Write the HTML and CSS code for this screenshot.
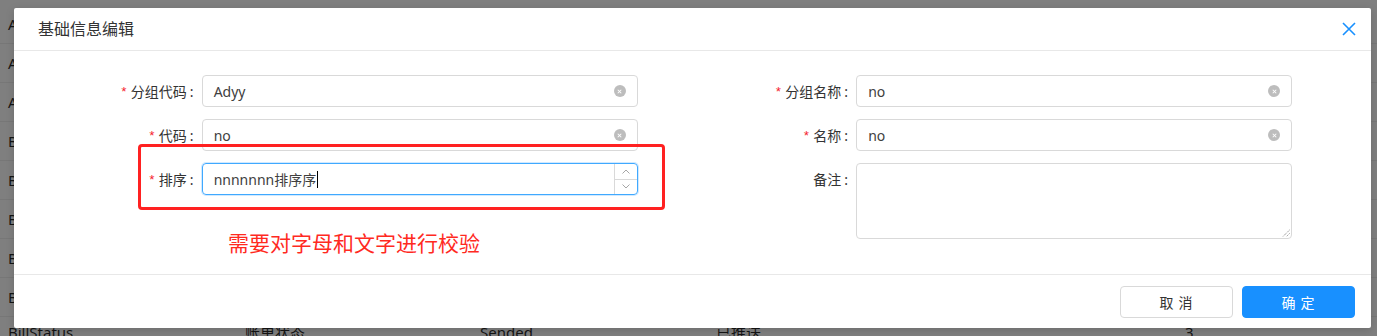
FILE: index.html
```html
<!DOCTYPE html>
<html lang="zh-CN">
<head>
<meta charset="utf-8">
<title>基础信息编辑</title>
<link rel="stylesheet" href="styles.css">
</head>
<body>
<div class="table">
  <div class="trow"><span class="c1">A</span></div>
  <div class="trow"><span class="c1">A</span></div>
  <div class="trow"><span class="c1">A</span></div>
  <div class="trow"><span class="c1">B</span></div>
  <div class="trow"><span class="c1">B</span></div>
  <div class="trow"><span class="c1">B</span></div>
  <div class="trow"><span class="c1">B</span></div>
  <div class="trow"><span class="c1">B</span></div>
  <div class="trow last"><span class="c1">BillStatus</span><span class="c2">账单状态</span><span class="c3">Sended</span><span class="c4">已推送</span><span class="c5">3</span></div>
</div>

<div class="modal">
  <div class="modal-header">
    <div class="modal-title">基础信息编辑</div>
    <svg class="close" width="14" height="14" viewBox="0 0 14 14"><path d="M1 1L13 13M13 1L1 13" stroke="#1890ff" stroke-width="1.6" fill="none"/></svg>
  </div>
  <div class="modal-body">
    <div class="form">
      <div class="item">
        <label class="label"><span class="req">*</span>分组代码<span class="colon">:</span></label>
        <div class="control"><div class="input"><span class="val">Adyy</span><span class="clear"></span></div></div>
      </div>
      <div class="item">
        <label class="label"><span class="req">*</span>分组名称<span class="colon">:</span></label>
        <div class="control"><div class="input"><span class="val">no</span><span class="clear"></span></div></div>
      </div>
      <div class="item">
        <label class="label"><span class="req">*</span>代码<span class="colon">:</span></label>
        <div class="control"><div class="input"><span class="val">no</span><span class="clear"></span></div></div>
      </div>
      <div class="item">
        <label class="label"><span class="req">*</span>名称<span class="colon">:</span></label>
        <div class="control"><div class="input"><span class="val">no</span><span class="clear"></span></div></div>
      </div>
      <div class="item">
        <label class="label"><span class="req">*</span>排序<span class="colon">:</span></label>
        <div class="control">
          <div class="input number">
            <span class="val">nnnnnnn排序序<span class="caret"></span></span>
            <div class="spin">
              <div class="spin-btn"><svg width="8" height="5" viewBox="0 0 8 5"><path d="M0.5 4.5L4 1L7.5 4.5" stroke="#a6a6a6" fill="none"/></svg></div>
              <div class="spin-btn"><svg width="8" height="5" viewBox="0 0 8 5"><path d="M0.5 0.5L4 4L7.5 0.5" stroke="#a6a6a6" fill="none"/></svg></div>
            </div>
          </div>
        </div>
      </div>
      <div class="item">
        <label class="label">备注<span class="colon">:</span></label>
        <div class="control"><div class="textarea">
          <svg class="grip" width="8" height="8" viewBox="0 0 8 8"><path d="M7.5 1L1 7.5M7.5 4.5L4.5 7.5" stroke="#777" stroke-width="1" fill="none" stroke-dasharray="1 1"/></svg>
        </div></div>
      </div>
    </div>
    <div class="mark-box"></div>
    <div class="mark-note">需要对字母和文字进行校验</div>
  </div>
  <div class="modal-footer">
    <button class="btn">取 消</button>
    <button class="btn primary">确 定</button>
  </div>
</div>
</body>
</html>
```
FILE: styles.css
```css
html, body {
  margin: 0;
  padding: 0;
  overflow: hidden;
}
body {
  width: 1377px;
  height: 336px;
  background: #7f7f7f;
  font-family: "Noto Sans", "Noto Sans CJK SC", sans-serif;
  font-size: 14px;
  color: #333;
  position: relative;
}

/* background table under the mask */
.table {
  padding-top: 5px;
  height: 331px;
  overflow: hidden;
}
.trow {
  height: 38px;
  border-bottom: 1px solid #777;
  position: relative;
  color: #141414;
  font-size: 15px;
  line-height: 38px;
}
.trow.last {
  height: 20px;
  line-height: 20px;
  padding-top: 5px;
  border-bottom: 0;
}
.trow span { position: absolute; }
.c1 { left: 8px; }
.c2 { left: 245px; }
.c3 { left: 480px; }
.c4 { left: 716px; }
.c5 { left: 1185px; }

/* modal */
.modal {
  position: absolute;
  left: 14px;
  top: 8px;
  width: 1357px;
  background: #fff;
  border-radius: 2px;
  box-shadow: 0 2px 8px rgba(0,0,0,0.15);
}
.modal-header {
  height: 42px;
  padding: 0 24px;
  display: flex;
  align-items: center;
  justify-content: space-between;
  border-bottom: 1px solid #e8e8e8;
}
.modal-title {
  font-size: 16px;
  color: #333;
  line-height: 22px;
}
.close {
  margin-right: -9px;
}
.modal-body {
  position: relative;
  padding: 24px 24px 35px;
}
.form {
  display: grid;
  grid-template-columns: 1fr 1fr;
  row-gap: 12px;
  align-items: start;
}
.item {
  display: flex;
  align-items: flex-start;
}
.label {
  width: 25%;
  height: 32px;
  display: flex;
  align-items: center;
  justify-content: flex-end;
  color: #333;
  font-size: 14px;
  white-space: nowrap;
}
.req {
  color: #f5222d;
  font-family: "Liberation Mono", monospace;
  font-size: 13px;
  margin-right: 3px;
  position: relative;
  top: 1px;
}
.colon {
  margin: 0 8px 0 3px;
}
.control {
  width: 66.6667%;
}
.input {
  height: 32px;
  box-sizing: border-box;
  border: 1px solid #d9d9d9;
  border-radius: 4px;
  display: flex;
  align-items: center;
  justify-content: space-between;
  padding: 0 11px;
  color: #404040;
  font-size: 14px;
}
.val {
  display: flex;
  align-items: center;
}
.clear {
  width: 12px;
  height: 12px;
  border-radius: 50%;
  background: #bdbdbd;
  position: relative;
}
.clear::before,
.clear::after {
  content: "";
  position: absolute;
  left: 3.5px;
  top: 5.5px;
  width: 5px;
  height: 1px;
  background: #fff;
  transform: rotate(45deg);
}
.clear::after {
  transform: rotate(-45deg);
}
.input.number {
  border-color: #40a9ff;
  box-shadow: 0 0 0 1px rgba(24,144,255,0.2);
  padding-right: 0;
}
.caret {
  display: inline-block;
  width: 1px;
  height: 17px;
  background: #000;
  margin-left: 1px;
}
.spin {
  width: 22px;
  height: 30px;
  border-left: 1px solid #d9d9d9;
  display: flex;
  flex-direction: column;
}
.spin-btn {
  flex: 1;
  display: flex;
  align-items: center;
  justify-content: center;
}
.spin-btn + .spin-btn {
  border-top: 1px solid #d9d9d9;
}
.textarea {
  height: 76px;
  box-sizing: border-box;
  border: 1px solid #d9d9d9;
  border-radius: 4px;
  position: relative;
}
.grip {
  position: absolute;
  right: 1px;
  bottom: 1px;
}

/* annotation overlays */
.mark-box {
  position: absolute;
  left: 124px;
  top: 93px;
  width: 527px;
  height: 66px;
  box-sizing: border-box;
  border: 3px solid #ff2121;
  border-radius: 4px;
}
.mark-note {
  position: absolute;
  left: 214px;
  top: 179px;
  font-size: 21px;
  line-height: 24px;
  color: #ff2a1f;
  font-family: "Noto Sans CJK SC", sans-serif;
}

.modal-footer {
  border-top: 1px solid #e8e8e8;
  padding: 11px 16px 10px;
  display: flex;
  justify-content: flex-end;
  gap: 9px;
}
.btn {
  width: 113px;
  height: 32px;
  border: 1px solid #d9d9d9;
  border-radius: 4px;
  background: #fff;
  color: #333;
  font-family: "Noto Sans CJK SC", sans-serif;
  font-size: 14px;
  padding: 0;
  letter-spacing: 1px;
}
.btn.primary {
  background: #1890ff;
  border-color: #1890ff;
  color: #fff;
}
```
